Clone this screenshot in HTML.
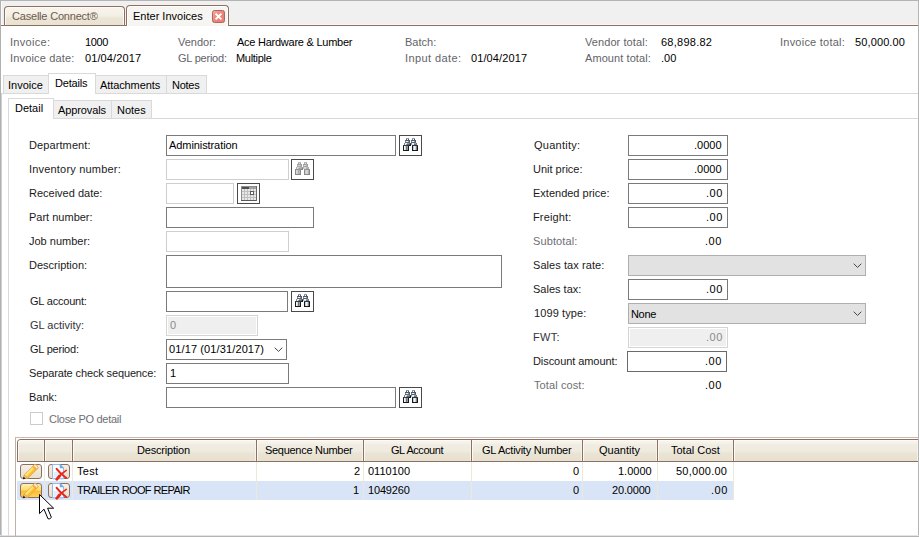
<!DOCTYPE html>
<html><head><meta charset="utf-8"><title>Enter Invoices</title>
<style>
html,body{margin:0;padding:0;}
body{width:919px;height:537px;overflow:hidden;background:#fff;position:relative;font:11px/13px "Liberation Sans",sans-serif;color:#000;}
.a{position:absolute;box-sizing:border-box;}
.t{position:absolute;white-space:nowrap;line-height:13px;height:13px;font-size:11px;}
.in{position:absolute;box-sizing:border-box;border:1px solid #7a7a7a;background:#fff;height:21px;}
.in.lt{border-color:#cfcfcf;}
.in.dis{border-color:#d4d4d4;background:#efefef;}
.btn{position:absolute;box-sizing:border-box;border:1px solid #4a4a4a;background:#fff;width:23px;height:21px;}
.sel{position:absolute;box-sizing:border-box;border:1px solid #aeaeae;background:#e2e2e2;height:21px;}
.tab{position:absolute;box-sizing:border-box;border:1px solid #d9d9d9;border-bottom:none;background:#f0f0f0;}
.tab.on{background:#fff;}
.rb{position:absolute;box-sizing:border-box;width:22px;height:15px;border:1px solid #8d6e5f;border-radius:3px;background:linear-gradient(#f4f0e7,#e7e0d0);}
.rb.hot{background:linear-gradient(#fff0b4,#ffdc6c 46%,#fdbc32 54%,#ffd05a);}
svg{position:absolute;overflow:visible;}
</style></head><body>
<!-- top strip -->
<div class="a" style="left:0;top:0;width:919px;height:26px;background:#f0f0f0;border-top:1px solid #b4b4b4;"></div>
<div class="a" style="left:0;top:24px;width:919px;height:1px;background:#f8f8f8;"></div>
<div class="a" style="left:0;top:25px;width:919px;height:1px;background:#8d7060;"></div>
<!-- top tabs -->
<div class="a" style="left:4px;top:6px;width:121px;height:19px;border:1px solid #8d7060;border-bottom:none;border-radius:4px 4px 0 0;background:linear-gradient(#f8f5ee 0,#f3efe5 9px,#ebe5d6 11px,#e9e2d2 19px);box-shadow:inset 1px 1px 0 #fcfbf8,inset -1px 0 0 #fcfbf8;"></div>
<div class="a" style="left:126px;top:5px;width:103px;height:21px;border:1px solid #8d7060;border-bottom:none;border-radius:4px 4px 0 0;background:#f6f5f1;box-shadow:inset 1px 1px 0 #fff,inset -1px 0 0 #fff;"></div>
<!-- close icon -->
<svg style="left:212px;top:10px" width="13" height="13" viewBox="0 0 13 13"><defs><linearGradient id="cg" x1="0" y1="0" x2="1" y2="1"><stop offset="0" stop-color="#f7aaa1"/><stop offset="0.5" stop-color="#f08379"/><stop offset="1" stop-color="#ee7a70"/></linearGradient></defs><rect x="0.5" y="0.5" width="12" height="12" rx="2" fill="url(#cg)" stroke="#a56a61"/><path d="M3.6 3.6L9.4 9.4M9.4 3.6L3.6 9.4" stroke="#fff" stroke-width="2" stroke-linecap="butt"/></svg>
<!-- window edges -->
<div class="a" style="left:0;top:0;width:1px;height:537px;background:#b0b0b0;"></div>
<div class="a" style="left:1px;top:1px;width:1px;height:24px;background:#fafafa;"></div>
<div class="a" style="left:918px;top:0;width:1px;height:537px;background:#b4b4b4;"></div>
<div class="a" style="left:0;top:536px;width:919px;height:1px;background:#b4b4b4;"></div>
<div class="a" style="left:0;top:535px;width:919px;height:1px;background:#e4e4e4;"></div>
<!-- outer tab control -->
<div class="a" style="left:1px;top:93px;width:917px;height:443px;border-top:1px solid #d9d9d9;border-left:1px solid #cfcfcf;"></div>
<div class="tab" style="left:3px;top:75px;width:46px;height:18px;"></div>
<div class="tab" style="left:95px;top:75px;width:72px;height:18px;"></div>
<div class="tab" style="left:166px;top:75px;width:41px;height:18px;"></div>
<div class="tab on" style="left:48px;top:73px;width:48px;height:21px;"></div>
<!-- inner tab control -->
<div class="a" style="left:8px;top:118px;width:910px;height:418px;border-top:1px solid #d9d9d9;border-left:1px solid #d9d9d9;"></div>
<div class="tab" style="left:53px;top:100px;width:59px;height:18px;"></div>
<div class="tab" style="left:111px;top:100px;width:41px;height:18px;"></div>
<div class="tab on" style="left:8px;top:98px;width:46px;height:21px;"></div>
<div class="in" style="left:166px;top:135px;width:230px"></div>
<div class="in lt" style="left:166px;top:159px;width:123px"></div>
<div class="in lt" style="left:166px;top:183px;width:68px"></div>
<div class="in" style="left:166px;top:207px;width:148px"></div>
<div class="in lt" style="left:166px;top:231px;width:123px"></div>
<div class="in" style="left:166px;top:255px;width:336px;height:33px"></div>
<div class="in" style="left:166px;top:291px;width:122px"></div>
<div class="in dis" style="left:166px;top:315px;width:92px;box-shadow:inset 0 0 0 1px #fff"></div>
<div class="in" style="left:166px;top:339px;width:121px"></div>
<svg style="left:274px;top:347px" width="9" height="5" viewBox="0 0 9 5"><path d="M0.7 0.7L4.5 4.4L8.3 0.7" fill="none" stroke="#444" stroke-width="1"/></svg>
<div class="in" style="left:166px;top:363px;width:123px"></div>
<div class="in" style="left:166px;top:387px;width:230px"></div>
<div class="btn" style="left:399px;top:135px"></div>
<svg style="left:403px;top:138px" width="15" height="13" viewBox="0 0 15 13" shape-rendering="crispEdges"><rect x="3" y="0" width="3" height="1" fill="#8d99a6"/><rect x="3" y="1" width="1" height="1" fill="#59626d"/><rect x="4" y="1" width="1" height="1" fill="#ffffff"/><rect x="5" y="1" width="1" height="1" fill="#4d5661"/><rect x="2" y="2" width="5" height="1" fill="#505a65"/><rect x="2" y="3" width="1" height="1" fill="#7c8793"/><rect x="3" y="3" width="2" height="1" fill="#eef2f6"/><rect x="5" y="3" width="1" height="1" fill="#8d99a6"/><rect x="6" y="3" width="1" height="1" fill="#505a65"/><rect x="2" y="4" width="5" height="1" fill="#5d6772"/><rect x="1" y="5" width="1" height="1" fill="#7c8793"/><rect x="2" y="5" width="1" height="1" fill="#dfe5ec"/><rect x="3" y="5" width="1" height="1" fill="#f8fafc"/><rect x="4" y="5" width="2" height="1" fill="#939fab"/><rect x="6" y="5" width="1" height="1" fill="#6a747f"/><rect x="7" y="5" width="1" height="1" fill="#3f4750"/><rect x="1" y="6" width="1" height="1" fill="#7c8793"/><rect x="2" y="6" width="1" height="1" fill="#eef2f6"/><rect x="3" y="6" width="1" height="1" fill="#939fab"/><rect x="4" y="6" width="3" height="1" fill="#59626d"/><rect x="7" y="6" width="1" height="1" fill="#16181a"/><rect x="0" y="7" width="6" height="1" fill="#33383e"/><rect x="6" y="7" width="2" height="1" fill="#16181a"/><rect x="0" y="8" width="1" height="4" fill="#16181a"/><rect x="1" y="8" width="1" height="4" fill="#f3f6f9"/><rect x="2" y="8" width="1" height="4" fill="#cfd7de"/><rect x="3" y="8" width="1" height="4" fill="#747c85"/><rect x="4" y="8" width="1" height="4" fill="#939ba4"/><rect x="5" y="8" width="1" height="4" fill="#16181a"/><rect x="3" y="9" width="1" height="2" fill="#666e77"/><rect x="0" y="12" width="6" height="1" fill="#16181a"/><rect x="9" y="0" width="3" height="1" fill="#8d99a6"/><rect x="9" y="1" width="1" height="1" fill="#7c8793"/><rect x="10" y="1" width="1" height="1" fill="#ffffff"/><rect x="11" y="1" width="1" height="1" fill="#4d5661"/><rect x="8" y="2" width="5" height="1" fill="#505a65"/><rect x="8" y="3" width="1" height="1" fill="#7c8793"/><rect x="9" y="3" width="2" height="1" fill="#eef2f6"/><rect x="11" y="3" width="1" height="1" fill="#8d99a6"/><rect x="12" y="3" width="1" height="1" fill="#505a65"/><rect x="8" y="4" width="5" height="1" fill="#5d6772"/><rect x="8" y="5" width="1" height="1" fill="#7c8793"/><rect x="9" y="5" width="2" height="1" fill="#f3f6f9"/><rect x="11" y="5" width="2" height="1" fill="#939fab"/><rect x="13" y="5" width="1" height="1" fill="#6a747f"/><rect x="8" y="6" width="1" height="1" fill="#aab4be"/><rect x="9" y="6" width="2" height="1" fill="#dfe5ec"/><rect x="11" y="6" width="3" height="1" fill="#6a747f"/><rect x="9" y="7" width="6" height="1" fill="#33383e"/><rect x="9" y="8" width="1" height="4" fill="#16181a"/><rect x="10" y="8" width="1" height="4" fill="#bccbda"/><rect x="11" y="8" width="1" height="4" fill="#f3f6f9"/><rect x="12" y="8" width="1" height="4" fill="#cfd7de"/><rect x="13" y="8" width="1" height="4" fill="#7c858e"/><rect x="14" y="8" width="1" height="4" fill="#16181a"/><rect x="9" y="12" width="6" height="1" fill="#16181a"/></svg>
<div class="btn" style="left:291px;top:159px"></div>
<svg style="left:295px;top:162px" width="15" height="13" viewBox="0 0 15 13" shape-rendering="crispEdges"><rect x="3" y="0" width="3" height="1" fill="#b7b7b7"/><rect x="3" y="1" width="1" height="1" fill="#a3a3a3"/><rect x="4" y="1" width="1" height="1" fill="#dedede"/><rect x="5" y="1" width="1" height="1" fill="#9f9f9f"/><rect x="2" y="2" width="5" height="1" fill="#a0a0a0"/><rect x="2" y="3" width="1" height="1" fill="#b1b1b1"/><rect x="3" y="3" width="2" height="1" fill="#d9d9d9"/><rect x="5" y="3" width="1" height="1" fill="#b7b7b7"/><rect x="6" y="3" width="1" height="1" fill="#a0a0a0"/><rect x="2" y="4" width="5" height="1" fill="#a5a5a5"/><rect x="1" y="5" width="1" height="1" fill="#b1b1b1"/><rect x="2" y="5" width="1" height="1" fill="#d4d4d4"/><rect x="3" y="5" width="1" height="1" fill="#dcdcdc"/><rect x="4" y="5" width="2" height="1" fill="#b9b9b9"/><rect x="6" y="5" width="1" height="1" fill="#aaaaaa"/><rect x="7" y="5" width="1" height="1" fill="#999999"/><rect x="1" y="6" width="1" height="1" fill="#b1b1b1"/><rect x="2" y="6" width="1" height="1" fill="#d9d9d9"/><rect x="3" y="6" width="1" height="1" fill="#b9b9b9"/><rect x="4" y="6" width="3" height="1" fill="#a3a3a3"/><rect x="7" y="6" width="1" height="1" fill="#888888"/><rect x="0" y="7" width="6" height="1" fill="#949494"/><rect x="6" y="7" width="2" height="1" fill="#888888"/><rect x="0" y="8" width="1" height="4" fill="#888888"/><rect x="1" y="8" width="1" height="4" fill="#dadada"/><rect x="2" y="8" width="1" height="4" fill="#cecece"/><rect x="3" y="8" width="1" height="4" fill="#adadad"/><rect x="4" y="8" width="1" height="4" fill="#b8b8b8"/><rect x="5" y="8" width="1" height="4" fill="#888888"/><rect x="3" y="9" width="1" height="2" fill="#a8a8a8"/><rect x="0" y="12" width="6" height="1" fill="#888888"/><rect x="9" y="0" width="3" height="1" fill="#b7b7b7"/><rect x="9" y="1" width="1" height="1" fill="#b1b1b1"/><rect x="10" y="1" width="1" height="1" fill="#dedede"/><rect x="11" y="1" width="1" height="1" fill="#9f9f9f"/><rect x="8" y="2" width="5" height="1" fill="#a0a0a0"/><rect x="8" y="3" width="1" height="1" fill="#b1b1b1"/><rect x="9" y="3" width="2" height="1" fill="#d9d9d9"/><rect x="11" y="3" width="1" height="1" fill="#b7b7b7"/><rect x="12" y="3" width="1" height="1" fill="#a0a0a0"/><rect x="8" y="4" width="5" height="1" fill="#a5a5a5"/><rect x="8" y="5" width="1" height="1" fill="#b1b1b1"/><rect x="9" y="5" width="2" height="1" fill="#dadada"/><rect x="11" y="5" width="2" height="1" fill="#b9b9b9"/><rect x="13" y="5" width="1" height="1" fill="#aaaaaa"/><rect x="8" y="6" width="1" height="1" fill="#c1c1c1"/><rect x="9" y="6" width="2" height="1" fill="#d4d4d4"/><rect x="11" y="6" width="3" height="1" fill="#aaaaaa"/><rect x="9" y="7" width="6" height="1" fill="#949494"/><rect x="9" y="8" width="1" height="4" fill="#888888"/><rect x="10" y="8" width="1" height="4" fill="#cacaca"/><rect x="11" y="8" width="1" height="4" fill="#dadada"/><rect x="12" y="8" width="1" height="4" fill="#cecece"/><rect x="13" y="8" width="1" height="4" fill="#b0b0b0"/><rect x="14" y="8" width="1" height="4" fill="#888888"/><rect x="9" y="12" width="6" height="1" fill="#888888"/></svg>
<div class="btn" style="left:291px;top:291px"></div>
<svg style="left:295px;top:294px" width="15" height="13" viewBox="0 0 15 13" shape-rendering="crispEdges"><rect x="3" y="0" width="3" height="1" fill="#8d99a6"/><rect x="3" y="1" width="1" height="1" fill="#59626d"/><rect x="4" y="1" width="1" height="1" fill="#ffffff"/><rect x="5" y="1" width="1" height="1" fill="#4d5661"/><rect x="2" y="2" width="5" height="1" fill="#505a65"/><rect x="2" y="3" width="1" height="1" fill="#7c8793"/><rect x="3" y="3" width="2" height="1" fill="#eef2f6"/><rect x="5" y="3" width="1" height="1" fill="#8d99a6"/><rect x="6" y="3" width="1" height="1" fill="#505a65"/><rect x="2" y="4" width="5" height="1" fill="#5d6772"/><rect x="1" y="5" width="1" height="1" fill="#7c8793"/><rect x="2" y="5" width="1" height="1" fill="#dfe5ec"/><rect x="3" y="5" width="1" height="1" fill="#f8fafc"/><rect x="4" y="5" width="2" height="1" fill="#939fab"/><rect x="6" y="5" width="1" height="1" fill="#6a747f"/><rect x="7" y="5" width="1" height="1" fill="#3f4750"/><rect x="1" y="6" width="1" height="1" fill="#7c8793"/><rect x="2" y="6" width="1" height="1" fill="#eef2f6"/><rect x="3" y="6" width="1" height="1" fill="#939fab"/><rect x="4" y="6" width="3" height="1" fill="#59626d"/><rect x="7" y="6" width="1" height="1" fill="#16181a"/><rect x="0" y="7" width="6" height="1" fill="#33383e"/><rect x="6" y="7" width="2" height="1" fill="#16181a"/><rect x="0" y="8" width="1" height="4" fill="#16181a"/><rect x="1" y="8" width="1" height="4" fill="#f3f6f9"/><rect x="2" y="8" width="1" height="4" fill="#cfd7de"/><rect x="3" y="8" width="1" height="4" fill="#747c85"/><rect x="4" y="8" width="1" height="4" fill="#939ba4"/><rect x="5" y="8" width="1" height="4" fill="#16181a"/><rect x="3" y="9" width="1" height="2" fill="#666e77"/><rect x="0" y="12" width="6" height="1" fill="#16181a"/><rect x="9" y="0" width="3" height="1" fill="#8d99a6"/><rect x="9" y="1" width="1" height="1" fill="#7c8793"/><rect x="10" y="1" width="1" height="1" fill="#ffffff"/><rect x="11" y="1" width="1" height="1" fill="#4d5661"/><rect x="8" y="2" width="5" height="1" fill="#505a65"/><rect x="8" y="3" width="1" height="1" fill="#7c8793"/><rect x="9" y="3" width="2" height="1" fill="#eef2f6"/><rect x="11" y="3" width="1" height="1" fill="#8d99a6"/><rect x="12" y="3" width="1" height="1" fill="#505a65"/><rect x="8" y="4" width="5" height="1" fill="#5d6772"/><rect x="8" y="5" width="1" height="1" fill="#7c8793"/><rect x="9" y="5" width="2" height="1" fill="#f3f6f9"/><rect x="11" y="5" width="2" height="1" fill="#939fab"/><rect x="13" y="5" width="1" height="1" fill="#6a747f"/><rect x="8" y="6" width="1" height="1" fill="#aab4be"/><rect x="9" y="6" width="2" height="1" fill="#dfe5ec"/><rect x="11" y="6" width="3" height="1" fill="#6a747f"/><rect x="9" y="7" width="6" height="1" fill="#33383e"/><rect x="9" y="8" width="1" height="4" fill="#16181a"/><rect x="10" y="8" width="1" height="4" fill="#bccbda"/><rect x="11" y="8" width="1" height="4" fill="#f3f6f9"/><rect x="12" y="8" width="1" height="4" fill="#cfd7de"/><rect x="13" y="8" width="1" height="4" fill="#7c858e"/><rect x="14" y="8" width="1" height="4" fill="#16181a"/><rect x="9" y="12" width="6" height="1" fill="#16181a"/></svg>
<div class="btn" style="left:399px;top:387px"></div>
<svg style="left:403px;top:390px" width="15" height="13" viewBox="0 0 15 13" shape-rendering="crispEdges"><rect x="3" y="0" width="3" height="1" fill="#8d99a6"/><rect x="3" y="1" width="1" height="1" fill="#59626d"/><rect x="4" y="1" width="1" height="1" fill="#ffffff"/><rect x="5" y="1" width="1" height="1" fill="#4d5661"/><rect x="2" y="2" width="5" height="1" fill="#505a65"/><rect x="2" y="3" width="1" height="1" fill="#7c8793"/><rect x="3" y="3" width="2" height="1" fill="#eef2f6"/><rect x="5" y="3" width="1" height="1" fill="#8d99a6"/><rect x="6" y="3" width="1" height="1" fill="#505a65"/><rect x="2" y="4" width="5" height="1" fill="#5d6772"/><rect x="1" y="5" width="1" height="1" fill="#7c8793"/><rect x="2" y="5" width="1" height="1" fill="#dfe5ec"/><rect x="3" y="5" width="1" height="1" fill="#f8fafc"/><rect x="4" y="5" width="2" height="1" fill="#939fab"/><rect x="6" y="5" width="1" height="1" fill="#6a747f"/><rect x="7" y="5" width="1" height="1" fill="#3f4750"/><rect x="1" y="6" width="1" height="1" fill="#7c8793"/><rect x="2" y="6" width="1" height="1" fill="#eef2f6"/><rect x="3" y="6" width="1" height="1" fill="#939fab"/><rect x="4" y="6" width="3" height="1" fill="#59626d"/><rect x="7" y="6" width="1" height="1" fill="#16181a"/><rect x="0" y="7" width="6" height="1" fill="#33383e"/><rect x="6" y="7" width="2" height="1" fill="#16181a"/><rect x="0" y="8" width="1" height="4" fill="#16181a"/><rect x="1" y="8" width="1" height="4" fill="#f3f6f9"/><rect x="2" y="8" width="1" height="4" fill="#cfd7de"/><rect x="3" y="8" width="1" height="4" fill="#747c85"/><rect x="4" y="8" width="1" height="4" fill="#939ba4"/><rect x="5" y="8" width="1" height="4" fill="#16181a"/><rect x="3" y="9" width="1" height="2" fill="#666e77"/><rect x="0" y="12" width="6" height="1" fill="#16181a"/><rect x="9" y="0" width="3" height="1" fill="#8d99a6"/><rect x="9" y="1" width="1" height="1" fill="#7c8793"/><rect x="10" y="1" width="1" height="1" fill="#ffffff"/><rect x="11" y="1" width="1" height="1" fill="#4d5661"/><rect x="8" y="2" width="5" height="1" fill="#505a65"/><rect x="8" y="3" width="1" height="1" fill="#7c8793"/><rect x="9" y="3" width="2" height="1" fill="#eef2f6"/><rect x="11" y="3" width="1" height="1" fill="#8d99a6"/><rect x="12" y="3" width="1" height="1" fill="#505a65"/><rect x="8" y="4" width="5" height="1" fill="#5d6772"/><rect x="8" y="5" width="1" height="1" fill="#7c8793"/><rect x="9" y="5" width="2" height="1" fill="#f3f6f9"/><rect x="11" y="5" width="2" height="1" fill="#939fab"/><rect x="13" y="5" width="1" height="1" fill="#6a747f"/><rect x="8" y="6" width="1" height="1" fill="#aab4be"/><rect x="9" y="6" width="2" height="1" fill="#dfe5ec"/><rect x="11" y="6" width="3" height="1" fill="#6a747f"/><rect x="9" y="7" width="6" height="1" fill="#33383e"/><rect x="9" y="8" width="1" height="4" fill="#16181a"/><rect x="10" y="8" width="1" height="4" fill="#bccbda"/><rect x="11" y="8" width="1" height="4" fill="#f3f6f9"/><rect x="12" y="8" width="1" height="4" fill="#cfd7de"/><rect x="13" y="8" width="1" height="4" fill="#7c858e"/><rect x="14" y="8" width="1" height="4" fill="#16181a"/><rect x="9" y="12" width="6" height="1" fill="#16181a"/></svg>
<div class="btn" style="left:237px;top:183px"></div>
<svg style="left:241px;top:186px" width="16" height="15" viewBox="0 0 16 15" shape-rendering="crispEdges"><rect x="0" y="0" width="16" height="15" fill="#8c8c8c"/><rect x="1" y="1" width="14" height="13" fill="#bfbfbf"/><rect x="1" y="1" width="7" height="2" fill="#4e4e4e"/><rect x="8" y="1" width="7" height="2" fill="#a2a2a2"/><rect x="0" y="14" width="16" height="1" fill="#5a5a5a"/><rect x="15" y="0" width="1" height="15" fill="#6a6a6a"/><rect x="1" y="3" width="2" height="2" fill="#e8e8e8"/><rect x="1" y="6" width="2" height="2" fill="#e8e8e8"/><rect x="1" y="9" width="2" height="2" fill="#e8e8e8"/><rect x="1" y="12" width="2" height="2" fill="#e8e8e8"/><rect x="4" y="3" width="2" height="2" fill="#e8e8e8"/><rect x="4" y="6" width="2" height="2" fill="#e8e8e8"/><rect x="4" y="9" width="2" height="2" fill="#e8e8e8"/><rect x="4" y="12" width="2" height="2" fill="#e8e8e8"/><rect x="7" y="3" width="2" height="2" fill="#e8e8e8"/><rect x="7" y="6" width="2" height="2" fill="#e8e8e8"/><rect x="7" y="9" width="2" height="2" fill="#e8e8e8"/><rect x="7" y="12" width="2" height="2" fill="#e8e8e8"/><rect x="10" y="3" width="2" height="2" fill="#e8e8e8"/><rect x="10" y="6" width="2" height="2" fill="#e8e8e8"/><rect x="10" y="9" width="2" height="2" fill="#e8e8e8"/><rect x="10" y="12" width="2" height="2" fill="#e8e8e8"/><rect x="13" y="3" width="2" height="2" fill="#e8e8e8"/><rect x="13" y="6" width="2" height="2" fill="#e8e8e8"/><rect x="13" y="9" width="2" height="2" fill="#e8e8e8"/><rect x="13" y="12" width="2" height="2" fill="#e8e8e8"/><rect x="9" y="5" width="4" height="4" fill="#5e5e5e"/><rect x="10" y="6" width="2" height="2" fill="#ffffff"/></svg>
<div class="a" style="left:30px;top:412px;width:13px;height:13px;border:1px solid #cccccc;background:#fff"></div>
<div class="in" style="left:628px;top:135px;width:100px"></div>
<div class="in" style="left:628px;top:159px;width:100px"></div>
<div class="in" style="left:628px;top:183px;width:100px"></div>
<div class="in" style="left:628px;top:207px;width:100px"></div>
<div class="in" style="left:628px;top:279px;width:100px"></div>
<div class="in" style="left:627px;top:351px;width:100px;border-color:#6a6a6a"></div>
<div class="in dis" style="left:628px;top:327px;width:100px;box-shadow:inset 0 0 0 1px #fff"></div>
<div class="sel" style="left:628px;top:255px;width:238px"></div>
<div class="sel" style="left:628px;top:303px;width:238px"></div>
<svg style="left:853px;top:263px" width="9" height="5" viewBox="0 0 9 5"><path d="M0.7 0.7L4.5 4.4L8.3 0.7" fill="none" stroke="#444" stroke-width="1"/></svg>
<svg style="left:853px;top:311px" width="9" height="5" viewBox="0 0 9 5"><path d="M0.7 0.7L4.5 4.4L8.3 0.7" fill="none" stroke="#444" stroke-width="1"/></svg>
<div class="a" style="left:15px;top:437px;width:903px;height:99px;border-left:1px solid #c3b1a7;border-top:1px solid #c9b9b0"></div>
<div class="a" style="left:17px;top:439px;width:901px;height:23px;background:#8d7060;border-radius:4px 0 0 0"></div>
<div class="a" style="left:18px;top:440px;width:26px;height:21px;border-radius:3px 0 0 0;background:linear-gradient(#f8f6f0 0,#f5f2ea 3px,#f0ece1 5px,#efebdf 11px,#e9e3d4 14px,#e8e1d1 21px);box-shadow:inset 1px 1px 0 #fbfaf6,inset -1px 0 0 #f6f3ec"></div>
<div class="a" style="left:45px;top:440px;width:27px;height:21px;background:linear-gradient(#f8f6f0 0,#f5f2ea 3px,#f0ece1 5px,#efebdf 11px,#e9e3d4 14px,#e8e1d1 21px);box-shadow:inset 1px 1px 0 #fbfaf6,inset -1px 0 0 #f6f3ec"></div>
<div class="a" style="left:73px;top:440px;width:183px;height:21px;background:linear-gradient(#f8f6f0 0,#f5f2ea 3px,#f0ece1 5px,#efebdf 11px,#e9e3d4 14px,#e8e1d1 21px);box-shadow:inset 1px 1px 0 #fbfaf6,inset -1px 0 0 #f6f3ec"></div>
<div class="a" style="left:257px;top:440px;width:106px;height:21px;background:linear-gradient(#f8f6f0 0,#f5f2ea 3px,#f0ece1 5px,#efebdf 11px,#e9e3d4 14px,#e8e1d1 21px);box-shadow:inset 1px 1px 0 #fbfaf6,inset -1px 0 0 #f6f3ec"></div>
<div class="a" style="left:364px;top:440px;width:107px;height:21px;background:linear-gradient(#f8f6f0 0,#f5f2ea 3px,#f0ece1 5px,#efebdf 11px,#e9e3d4 14px,#e8e1d1 21px);box-shadow:inset 1px 1px 0 #fbfaf6,inset -1px 0 0 #f6f3ec"></div>
<div class="a" style="left:472px;top:440px;width:110px;height:21px;background:linear-gradient(#f8f6f0 0,#f5f2ea 3px,#f0ece1 5px,#efebdf 11px,#e9e3d4 14px,#e8e1d1 21px);box-shadow:inset 1px 1px 0 #fbfaf6,inset -1px 0 0 #f6f3ec"></div>
<div class="a" style="left:583px;top:440px;width:74px;height:21px;background:linear-gradient(#f8f6f0 0,#f5f2ea 3px,#f0ece1 5px,#efebdf 11px,#e9e3d4 14px,#e8e1d1 21px);box-shadow:inset 1px 1px 0 #fbfaf6,inset -1px 0 0 #f6f3ec"></div>
<div class="a" style="left:658px;top:440px;width:75px;height:21px;background:linear-gradient(#f8f6f0 0,#f5f2ea 3px,#f0ece1 5px,#efebdf 11px,#e9e3d4 14px,#e8e1d1 21px);box-shadow:inset 1px 1px 0 #fbfaf6,inset -1px 0 0 #f6f3ec"></div>
<div class="a" style="left:734px;top:440px;width:184px;height:21px;background:linear-gradient(#f8f6f0 0,#f5f2ea 3px,#f0ece1 5px,#efebdf 11px,#e9e3d4 14px,#e8e1d1 21px);box-shadow:inset 1px 1px 0 #fbfaf6,inset -1px 0 0 #f6f3ec"></div>
<div class="a" style="left:17px;top:481px;width:716px;height:19px;background:#d9e5f7"></div>
<div class="a" style="left:44px;top:462px;width:1px;height:38px;background:#ece8dc"></div>
<div class="a" style="left:72px;top:462px;width:1px;height:38px;background:#ece8dc"></div>
<div class="a" style="left:256px;top:462px;width:1px;height:38px;background:#ece8dc"></div>
<div class="a" style="left:363px;top:462px;width:1px;height:38px;background:#ece8dc"></div>
<div class="a" style="left:471px;top:462px;width:1px;height:38px;background:#ece8dc"></div>
<div class="a" style="left:582px;top:462px;width:1px;height:38px;background:#ece8dc"></div>
<div class="a" style="left:657px;top:462px;width:1px;height:38px;background:#ece8dc"></div>
<div class="a" style="left:733px;top:462px;width:1px;height:38px;background:#ece8dc"></div>
<div class="rb" style="left:20px;top:464px"></div>
<svg style="left:20px;top:464px" width="22" height="16" viewBox="0 0 22 16"><g transform="translate(-0.3 0.6)"><path d="M4.57 10.37 L15.1 -0.16 L18.56 3.3 L8.03 13.83 Z" fill="#ffd64a" stroke="#e9a535" stroke-width="0.9" stroke-linejoin="round"/><path d="M5.9 10.6 L16.0 0.5" stroke="#ffeb8a" stroke-width="1.3" fill="none"/><path d="M7.6 12.6 L17.8 2.4" stroke="#f7b53c" stroke-width="1.2" fill="none"/><path d="M13.7 1.24 L15.1 -0.16 Q17.3 -0.4 18.56 3.3 L17.16 4.7 Z" fill="#f8ecd8" stroke="#e9a535" stroke-width="0.8" stroke-linejoin="round"/><path d="M13.0 1.95 L16.45 5.4" stroke="#f0a93a" stroke-width="1.1" fill="none"/><path d="M3.4 14.3 L4.57 10.37 L8.03 13.83 Z" fill="#efc796" stroke="#cf9350" stroke-width="0.6" stroke-linejoin="round"/><path d="M3.1 14.7 L3.9 12.0 L6.0 14.1 Z" fill="#2b2417"/></g></svg>
<div class="rb" style="left:48px;top:464px"></div>
<svg style="left:48px;top:464px" width="22" height="17" viewBox="0 0 22 17"><path d="M4.5 0.5 H12 L15.5 4 V14.8 H4.5 Z" fill="#f4f9fe" stroke="#8fbdec" stroke-width="1"/><path d="M5.5 1.5 H11.5 L14.5 4.5 V13.5 H5.5 Z" fill="#ffffff"/><path d="M5.5 8 H14.5 V13.5 H5.5 Z" fill="#e2eefb"/><path d="M12 0.5 L12 4 L15.5 4 Z" fill="#6aa8e8" stroke="#6aa8e8" stroke-width="0.5"/><path d="M8.6 4.8 Q12 9.2 18.3 14.0" stroke="#ee2413" stroke-width="2.0" fill="none" stroke-linecap="round"/><path d="M18.2 6.4 Q13.5 9.5 10.5 13.2" stroke="#ee2413" stroke-width="1.7" fill="none" stroke-linecap="round"/><path d="M11.5 12 L8.7 15.3" stroke="#ee2413" stroke-width="2.8" fill="none" stroke-linecap="round"/></svg>
<div class="rb hot" style="left:20px;top:483px"></div>
<svg style="left:20px;top:483px" width="22" height="16" viewBox="0 0 22 16"><g transform="translate(-0.3 0.6)"><path d="M4.57 10.37 L15.1 -0.16 L18.56 3.3 L8.03 13.83 Z" fill="#ffd64a" stroke="#e9a535" stroke-width="0.9" stroke-linejoin="round"/><path d="M5.9 10.6 L16.0 0.5" stroke="#ffeb8a" stroke-width="1.3" fill="none"/><path d="M7.6 12.6 L17.8 2.4" stroke="#f7b53c" stroke-width="1.2" fill="none"/><path d="M13.7 1.24 L15.1 -0.16 Q17.3 -0.4 18.56 3.3 L17.16 4.7 Z" fill="#f8ecd8" stroke="#e9a535" stroke-width="0.8" stroke-linejoin="round"/><path d="M13.0 1.95 L16.45 5.4" stroke="#f0a93a" stroke-width="1.1" fill="none"/><path d="M3.4 14.3 L4.57 10.37 L8.03 13.83 Z" fill="#efc796" stroke="#cf9350" stroke-width="0.6" stroke-linejoin="round"/><path d="M3.1 14.7 L3.9 12.0 L6.0 14.1 Z" fill="#2b2417"/></g></svg>
<div class="rb" style="left:48px;top:483px"></div>
<svg style="left:48px;top:483px" width="22" height="17" viewBox="0 0 22 17"><path d="M4.5 0.5 H12 L15.5 4 V14.8 H4.5 Z" fill="#f4f9fe" stroke="#8fbdec" stroke-width="1"/><path d="M5.5 1.5 H11.5 L14.5 4.5 V13.5 H5.5 Z" fill="#ffffff"/><path d="M5.5 8 H14.5 V13.5 H5.5 Z" fill="#e2eefb"/><path d="M12 0.5 L12 4 L15.5 4 Z" fill="#6aa8e8" stroke="#6aa8e8" stroke-width="0.5"/><path d="M8.6 4.8 Q12 9.2 18.3 14.0" stroke="#ee2413" stroke-width="2.0" fill="none" stroke-linecap="round"/><path d="M18.2 6.4 Q13.5 9.5 10.5 13.2" stroke="#ee2413" stroke-width="1.7" fill="none" stroke-linecap="round"/><path d="M11.5 12 L8.7 15.3" stroke="#ee2413" stroke-width="2.8" fill="none" stroke-linecap="round"/></svg>
<svg style="left:38px;top:493px" width="18" height="28" viewBox="0 0 18 28"><path d="M1.5 1.5 V20.6 L6 16.2 L10 25.8 Q11.8 26.4 13.4 24.4 L9.6 15.2 H15.6 Z" fill="#fff" stroke="#000" stroke-width="1" stroke-linejoin="miter"/></svg>
<span class="t" style="left:12px;top:10px;letter-spacing:-0.20px;color:#6e5a50">Caselle Connect®</span>
<span class="t" style="left:133px;top:10px">Enter Invoices</span>
<span class="t" style="left:10px;top:36px;letter-spacing:0.29px;color:#636369">Invoice:</span>
<span class="t" style="left:10px;top:52px;letter-spacing:0.17px;color:#636369">Invoice date:</span>
<span class="t" style="left:85px;top:36px;letter-spacing:-0.33px">1000</span>
<span class="t" style="left:85px;top:52px;letter-spacing:0.11px">01/04/2017</span>
<span class="t" style="left:178px;top:36px;color:#636369">Vendor:</span>
<span class="t" style="left:178px;top:52px;letter-spacing:-0.22px;color:#636369">GL period:</span>
<span class="t" style="left:237px;top:36px;letter-spacing:-0.25px">Ace Hardware &amp; Lumber</span>
<span class="t" style="left:236px;top:52px;letter-spacing:-0.29px">Multiple</span>
<span class="t" style="left:405px;top:36px;color:#636369">Batch:</span>
<span class="t" style="left:405px;top:52px;letter-spacing:0.40px;color:#636369">Input date:</span>
<span class="t" style="left:471px;top:52px;letter-spacing:0.11px">01/04/2017</span>
<span class="t" style="left:585px;top:36px;letter-spacing:0.08px;color:#636369">Vendor total:</span>
<span class="t" style="left:585px;top:52px;letter-spacing:0.08px;color:#636369">Amount total:</span>
<span class="t" style="left:661px;top:36px;letter-spacing:0.25px">68,898.82</span>
<span class="t" style="left:661px;top:52px">.00</span>
<span class="t" style="left:780px;top:36px;letter-spacing:0.23px;color:#636369">Invoice total:</span>
<span class="t" style="left:855px;top:36px;letter-spacing:0.12px">50,000.00</span>
<span class="t" style="left:8px;top:79px">Invoice</span>
<span class="t" style="left:55px;top:77px;letter-spacing:-0.17px">Details</span>
<span class="t" style="left:100px;top:79px;letter-spacing:-0.10px">Attachments</span>
<span class="t" style="left:172px;top:79px;letter-spacing:-0.25px">Notes</span>
<span class="t" style="left:15px;top:102px">Detail</span>
<span class="t" style="left:58px;top:104px;letter-spacing:-0.12px">Approvals</span>
<span class="t" style="left:117px;top:104px">Notes</span>
<span class="t" style="left:29px;top:139px;letter-spacing:0.10px;color:#1a1a1a">Department:</span>
<span class="t" style="left:29px;top:163px;letter-spacing:0.19px;color:#1a1a1a">Inventory number:</span>
<span class="t" style="left:29px;top:187px;color:#1a1a1a">Received date:</span>
<span class="t" style="left:29px;top:211px;color:#1a1a1a">Part number:</span>
<span class="t" style="left:29px;top:235px;color:#1a1a1a">Job number:</span>
<span class="t" style="left:29px;top:259px;color:#1a1a1a">Description:</span>
<span class="t" style="left:30px;top:295px;letter-spacing:-0.20px;color:#1a1a1a">GL account:</span>
<span class="t" style="left:30px;top:319px;color:#33333b">GL activity:</span>
<span class="t" style="left:30px;top:343px;letter-spacing:-0.22px;color:#1a1a1a">GL period:</span>
<span class="t" style="left:29px;top:367px;letter-spacing:-0.13px;color:#1a1a1a">Separate check sequence:</span>
<span class="t" style="left:29px;top:391px;color:#1a1a1a">Bank:</span>
<span class="t" style="left:49px;top:413px;letter-spacing:-0.29px;color:#6e6e74">Close PO detail</span>
<span class="t" style="left:169px;top:139px;letter-spacing:-0.08px">Administration</span>
<span class="t" style="left:170px;top:319px;color:#8a8a8a">0</span>
<span class="t" style="left:169px;top:343px;letter-spacing:0.12px">01/17 (01/31/2017)</span>
<span class="t" style="left:170px;top:367px">1</span>
<span class="t" style="left:534px;top:139px;letter-spacing:0.25px;color:#1a1a1a">Quantity:</span>
<span class="t" style="left:533px;top:163px;color:#1a1a1a">Unit price:</span>
<span class="t" style="left:533px;top:187px;color:#1a1a1a">Extended price:</span>
<span class="t" style="left:533px;top:211px;letter-spacing:0.14px;color:#1a1a1a">Freight:</span>
<span class="t" style="left:533px;top:235px;letter-spacing:0.12px;color:#6e6e74">Subtotal:</span>
<span class="t" style="left:533px;top:259px;letter-spacing:0.07px;color:#1a1a1a">Sales tax rate:</span>
<span class="t" style="left:533px;top:283px;color:#1a1a1a">Sales tax:</span>
<span class="t" style="left:534px;top:307px;letter-spacing:0.11px;color:#1a1a1a">1099 type:</span>
<span class="t" style="left:533px;top:331px;letter-spacing:0.33px;color:#33333b">FWT:</span>
<span class="t" style="left:533px;top:355px;letter-spacing:-0.07px;color:#1a1a1a">Discount amount:</span>
<span class="t" style="left:534px;top:379px;letter-spacing:0.10px;color:#6e6e74">Total cost:</span>
<span class="t" style="left:694px;top:139px">.0000</span>
<span class="t" style="left:694px;top:163px">.0000</span>
<span class="t" style="left:706px;top:187px;letter-spacing:0.50px">.00</span>
<span class="t" style="left:706px;top:211px;letter-spacing:0.50px">.00</span>
<span class="t" style="left:705px;top:235px;letter-spacing:0.50px">.00</span>
<span class="t" style="left:706px;top:283px;letter-spacing:0.50px">.00</span>
<span class="t" style="left:631px;top:308px;letter-spacing:-0.33px">None</span>
<span class="t" style="left:706px;top:331px;letter-spacing:0.50px;color:#8a8a8a">.00</span>
<span class="t" style="left:705px;top:355px;letter-spacing:0.50px">.00</span>
<span class="t" style="left:705px;top:379px;letter-spacing:0.50px">.00</span>
<span class="t" style="left:137px;top:444px;letter-spacing:-0.20px">Description</span>
<span class="t" style="left:265px;top:444px;letter-spacing:-0.29px">Sequence Number</span>
<span class="t" style="left:391px;top:444px;letter-spacing:-0.44px">GL Account</span>
<span class="t" style="left:482px;top:444px;letter-spacing:-0.24px">GL Activity Number</span>
<span class="t" style="left:599px;top:444px">Quantity</span>
<span class="t" style="left:671px;top:444px">Total Cost</span>
<span class="t" style="left:77px;top:465px;letter-spacing:0.33px">Test</span>
<span class="t" style="left:354px;top:465px">2</span>
<span class="t" style="left:368px;top:465px">0110100</span>
<span class="t" style="left:573px;top:465px">0</span>
<span class="t" style="left:618px;top:465px">1.0000</span>
<span class="t" style="left:676px;top:465px;letter-spacing:0.25px">50,000.00</span>
<span class="t" style="left:77px;top:484px;letter-spacing:-0.61px">TRAILER ROOF REPAIR</span>
<span class="t" style="left:353px;top:484px">1</span>
<span class="t" style="left:368px;top:484px;letter-spacing:-0.17px">1049260</span>
<span class="t" style="left:573px;top:484px">0</span>
<span class="t" style="left:612px;top:484px;letter-spacing:-0.17px">20.0000</span>
<span class="t" style="left:711px;top:484px;letter-spacing:0.50px">.00</span>
</body></html>
